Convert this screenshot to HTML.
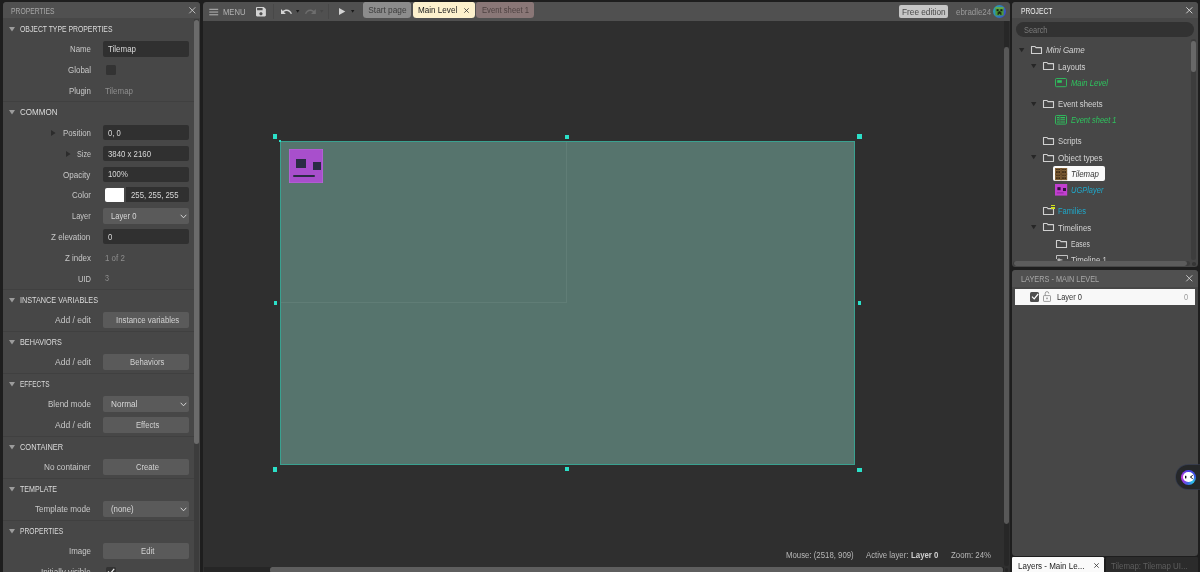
<!DOCTYPE html>
<html><head><meta charset="utf-8"><title>Construct 3</title>
<style>
html,body{margin:0;padding:0;}
body{width:1200px;height:572px;overflow:hidden;background:#1e1e1e;position:relative;font-family:"Liberation Sans",sans-serif;}
body div,body span,body svg{position:absolute;display:block;}
svg{overflow:visible;}
#w{left:0;top:0;width:1200px;height:572px;will-change:transform;}
</style></head><body><div id="w">
<div style="left:3px;top:2px;width:197px;height:571px;background:#474747;border-radius:3.5px 3.5px 0 0;"></div>
<div style="left:3px;top:2px;width:197px;height:15.7px;background:#505050;border-radius:3.5px 3.5px 0 0;"></div>
<span style="left:10.5px;top:4.5px;height:13px;line-height:13px;font-size:8.3px;color:#a8a8a8;white-space:nowrap;transform-origin:0 50%;transform:scaleX(0.8154);">PROPERTIES</span>
<svg style="left:188.6px;top:7.2px;" width="6.6" height="6.6" viewBox="0 0 6.6 6.6"><path d="M0.3 0.3 L6.3 6.3 M6.3 0.3 L0.3 6.3" stroke="#c8c8c8" stroke-width="0.9" fill="none"/></svg>
<div style="left:194.1px;top:18.5px;width:5px;height:555px;background:#3c3c3c;"></div>
<div style="left:194.1px;top:19.8px;width:5px;height:424px;background:#6b6b6b;border-radius:2.5px;"></div>
<svg style="left:8.7px;top:26.6px;" width="6" height="5" viewBox="0 0 6 5"><path d="M0 0 H6 L3 4.6 Z" fill="#9c9c9c"/></svg>
<span style="left:20px;top:22.5px;height:13px;line-height:13px;font-size:8.3px;color:#dcdcdc;white-space:nowrap;transform-origin:0 50%;transform:scaleX(0.8253);">OBJECT TYPE PROPERTIES</span>
<span style="left:69.5px;top:43px;height:13px;line-height:13px;font-size:8.3px;color:#c8c8c8;white-space:nowrap;transform-origin:0 50%;transform:scaleX(0.9486);">Name</span>
<div style="left:103px;top:41.2px;width:86px;height:15.6px;background:#303030;border-radius:2px;"></div>
<span style="left:108.2px;top:43.05px;height:13px;line-height:13px;font-size:8.3px;color:#d8d8d8;white-space:nowrap;transform-origin:0 50%;transform:scaleX(0.9585);">Tilemap</span>
<span style="left:67.5px;top:64px;height:13px;line-height:13px;font-size:8.3px;color:#c8c8c8;white-space:nowrap;transform-origin:0 50%;transform:scaleX(0.9587);">Global</span>
<div style="left:106px;top:65.2px;width:9.6px;height:9.4px;background:#333;border-radius:1.5px;"></div>
<span style="left:68.5px;top:84.8px;height:13px;line-height:13px;font-size:8.3px;color:#c8c8c8;white-space:nowrap;transform-origin:0 50%;transform:scaleX(0.9536);">Plugin</span>
<span style="left:105.2px;top:84.8px;height:13px;line-height:13px;font-size:8.3px;color:#8e8e8e;white-space:nowrap;transform-origin:0 50%;transform:scaleX(0.9585);">Tilemap</span>
<div style="left:3px;top:100.5px;width:191px;height:1px;background:#404040;"></div>
<svg style="left:8.7px;top:109.6px;" width="6" height="5" viewBox="0 0 6 5"><path d="M0 0 H6 L3 4.6 Z" fill="#9c9c9c"/></svg>
<span style="left:20px;top:105.5px;height:13px;line-height:13px;font-size:8.3px;color:#dcdcdc;white-space:nowrap;transform-origin:0 50%;transform:scaleX(0.9683);">COMMON</span>
<svg style="left:51.2px;top:129.8px;" width="5" height="6" viewBox="0 0 5 6"><path d="M0 0 L4.6 3 L0 6 Z" fill="#2c2c2c"/></svg>
<span style="left:62.5px;top:126.8px;height:13px;line-height:13px;font-size:8.3px;color:#c8c8c8;white-space:nowrap;transform-origin:0 50%;transform:scaleX(0.9483);">Position</span>
<div style="left:103px;top:124.7px;width:86px;height:15.6px;background:#303030;border-radius:2px;"></div>
<span style="left:108.2px;top:126.55px;height:13px;line-height:13px;font-size:8.3px;color:#d8d8d8;white-space:nowrap;transform-origin:0 50%;transform:scaleX(0.9247);">0, 0</span>
<svg style="left:65.8px;top:150.8px;" width="5" height="6" viewBox="0 0 5 6"><path d="M0 0 L4.6 3 L0 6 Z" fill="#2c2c2c"/></svg>
<span style="left:76.5px;top:147.8px;height:13px;line-height:13px;font-size:8.3px;color:#c8c8c8;white-space:nowrap;transform-origin:0 50%;transform:scaleX(0.8671);">Size</span>
<div style="left:103px;top:145.7px;width:86px;height:15.6px;background:#303030;border-radius:2px;"></div>
<span style="left:108.2px;top:147.55px;height:13px;line-height:13px;font-size:8.3px;color:#d8d8d8;white-space:nowrap;transform-origin:0 50%;transform:scaleX(0.9412);">3840 x 2160</span>
<span style="left:63.2px;top:168.6px;height:13px;line-height:13px;font-size:8.3px;color:#c8c8c8;white-space:nowrap;transform-origin:0 50%;transform:scaleX(0.9703);">Opacity</span>
<div style="left:103px;top:166.5px;width:86px;height:15.6px;background:#303030;border-radius:2px;"></div>
<span style="left:108.2px;top:168.35px;height:13px;line-height:13px;font-size:8.3px;color:#d8d8d8;white-space:nowrap;transform-origin:0 50%;transform:scaleX(0.9328);">100%</span>
<span style="left:71.5px;top:189px;height:13px;line-height:13px;font-size:8.3px;color:#c8c8c8;white-space:nowrap;transform-origin:0 50%;transform:scaleX(0.9580);">Color</span>
<div style="left:125.6px;top:186.9px;width:63.4px;height:15.6px;background:#303030;border-radius:0 2px 2px 0;"></div>
<span style="left:130.5px;top:188.75px;height:13px;line-height:13px;font-size:8.3px;color:#d8d8d8;white-space:nowrap;transform-origin:0 50%;transform:scaleX(0.9357);">255, 255, 255</span>
<div style="left:104.8px;top:188px;width:19.4px;height:13.8px;background:#fff;border-radius:2px 0 0 2px;"></div>
<span style="left:71.8px;top:210px;height:13px;line-height:13px;font-size:8.3px;color:#c8c8c8;white-space:nowrap;transform-origin:0 50%;transform:scaleX(0.9008);">Layer</span>
<div style="left:103px;top:208.1px;width:86px;height:15.6px;background:#5a5a5a;border-radius:2px;"></div>
<span style="left:110.8px;top:210.1px;height:13px;line-height:13px;font-size:8.3px;color:#d8d8d8;white-space:nowrap;transform-origin:0 50%;transform:scaleX(0.9176);">Layer 0</span>
<svg style="left:180px;top:213.5px;" width="7" height="5" viewBox="0 0 7 5"><path d="M0.7 0.8 L3.5 3.8 L6.3 0.8" stroke="#e0e0e0" stroke-width="0.9" fill="none"/></svg>
<span style="left:51.2px;top:231px;height:13px;line-height:13px;font-size:8.3px;color:#c8c8c8;white-space:nowrap;transform-origin:0 50%;transform:scaleX(0.9680);">Z elevation</span>
<div style="left:103px;top:228.9px;width:86px;height:15.6px;background:#303030;border-radius:2px;"></div>
<span style="left:108.2px;top:230.75px;height:13px;line-height:13px;font-size:8.3px;color:#d8d8d8;white-space:nowrap;transform-origin:0 50%;transform:scaleX(0.9316);">0</span>
<span style="left:64.5px;top:251.8px;height:13px;line-height:13px;font-size:8.3px;color:#c8c8c8;white-space:nowrap;transform-origin:0 50%;transform:scaleX(0.9553);">Z index</span>
<span style="left:105.2px;top:251.8px;height:13px;line-height:13px;font-size:8.3px;color:#8e8e8e;white-space:nowrap;transform-origin:0 50%;transform:scaleX(0.9536);">1 of 2</span>
<span style="left:77.5px;top:272.5px;height:13px;line-height:13px;font-size:8.3px;color:#c8c8c8;white-space:nowrap;transform-origin:0 50%;transform:scaleX(0.9095);">UID</span>
<span style="left:105.2px;top:272px;height:13px;line-height:13px;font-size:8.3px;color:#8e8e8e;white-space:nowrap;transform-origin:0 50%;transform:scaleX(0.8666);">3</span>
<div style="left:3px;top:288.5px;width:191px;height:1px;background:#404040;"></div>
<svg style="left:8.7px;top:297.6px;" width="6" height="5" viewBox="0 0 6 5"><path d="M0 0 H6 L3 4.6 Z" fill="#9c9c9c"/></svg>
<span style="left:20px;top:293.5px;height:13px;line-height:13px;font-size:8.3px;color:#dcdcdc;white-space:nowrap;transform-origin:0 50%;transform:scaleX(0.8747);">INSTANCE VARIABLES</span>
<span style="left:54.5px;top:314.2px;height:13px;line-height:13px;font-size:8.3px;color:#c8c8c8;white-space:nowrap;transform-origin:0 50%;transform:scaleX(1.0266);">Add / edit</span>
<div style="left:103px;top:312.3px;width:86px;height:15.6px;background:#5a5a5a;border-radius:2px;"></div>
<span style="left:115.5px;top:314.3px;height:13px;line-height:13px;font-size:8.3px;color:#d2d2d2;white-space:nowrap;transform-origin:0 50%;transform:scaleX(0.9463);">Instance variables</span>
<div style="left:3px;top:330.5px;width:191px;height:1px;background:#404040;"></div>
<svg style="left:8.7px;top:339.6px;" width="6" height="5" viewBox="0 0 6 5"><path d="M0 0 H6 L3 4.6 Z" fill="#9c9c9c"/></svg>
<span style="left:20px;top:335.5px;height:13px;line-height:13px;font-size:8.3px;color:#dcdcdc;white-space:nowrap;transform-origin:0 50%;transform:scaleX(0.8742);">BEHAVIORS</span>
<span style="left:54.5px;top:356.2px;height:13px;line-height:13px;font-size:8.3px;color:#c8c8c8;white-space:nowrap;transform-origin:0 50%;transform:scaleX(1.0266);">Add / edit</span>
<div style="left:103px;top:354.3px;width:86px;height:15.6px;background:#5a5a5a;border-radius:2px;"></div>
<span style="left:129.8px;top:356.3px;height:13px;line-height:13px;font-size:8.3px;color:#d2d2d2;white-space:nowrap;transform-origin:0 50%;transform:scaleX(0.9321);">Behaviors</span>
<div style="left:3px;top:372.5px;width:191px;height:1px;background:#404040;"></div>
<svg style="left:8.7px;top:381.6px;" width="6" height="5" viewBox="0 0 6 5"><path d="M0 0 H6 L3 4.6 Z" fill="#9c9c9c"/></svg>
<span style="left:20px;top:377.5px;height:13px;line-height:13px;font-size:8.3px;color:#dcdcdc;white-space:nowrap;transform-origin:0 50%;transform:scaleX(0.7802);">EFFECTS</span>
<span style="left:47.5px;top:398.2px;height:13px;line-height:13px;font-size:8.3px;color:#c8c8c8;white-space:nowrap;transform-origin:0 50%;transform:scaleX(0.9708);">Blend mode</span>
<div style="left:103px;top:396.3px;width:86px;height:15.6px;background:#5a5a5a;border-radius:2px;"></div>
<span style="left:110.8px;top:398.3px;height:13px;line-height:13px;font-size:8.3px;color:#d8d8d8;white-space:nowrap;transform-origin:0 50%;transform:scaleX(0.9870);">Normal</span>
<svg style="left:180px;top:401.7px;" width="7" height="5" viewBox="0 0 7 5"><path d="M0.7 0.8 L3.5 3.8 L6.3 0.8" stroke="#e0e0e0" stroke-width="0.9" fill="none"/></svg>
<span style="left:54.5px;top:419px;height:13px;line-height:13px;font-size:8.3px;color:#c8c8c8;white-space:nowrap;transform-origin:0 50%;transform:scaleX(1.0266);">Add / edit</span>
<div style="left:103px;top:417.1px;width:86px;height:15.6px;background:#5a5a5a;border-radius:2px;"></div>
<span style="left:135.5px;top:419.1px;height:13px;line-height:13px;font-size:8.3px;color:#d2d2d2;white-space:nowrap;transform-origin:0 50%;transform:scaleX(0.9239);">Effects</span>
<div style="left:3px;top:435.9px;width:191px;height:1px;background:#404040;"></div>
<svg style="left:8.7px;top:445px;" width="6" height="5" viewBox="0 0 6 5"><path d="M0 0 H6 L3 4.6 Z" fill="#9c9c9c"/></svg>
<span style="left:20px;top:440.9px;height:13px;line-height:13px;font-size:8.3px;color:#dcdcdc;white-space:nowrap;transform-origin:0 50%;transform:scaleX(0.8951);">CONTAINER</span>
<span style="left:44px;top:461.2px;height:13px;line-height:13px;font-size:8.3px;color:#c8c8c8;white-space:nowrap;transform-origin:0 50%;transform:scaleX(0.9882);">No container</span>
<div style="left:103px;top:459.3px;width:86px;height:15.6px;background:#5a5a5a;border-radius:2px;"></div>
<span style="left:135.8px;top:461.3px;height:13px;line-height:13px;font-size:8.3px;color:#d2d2d2;white-space:nowrap;transform-origin:0 50%;transform:scaleX(0.9233);">Create</span>
<div style="left:3px;top:477.5px;width:191px;height:1px;background:#404040;"></div>
<svg style="left:8.7px;top:486.6px;" width="6" height="5" viewBox="0 0 6 5"><path d="M0 0 H6 L3 4.6 Z" fill="#9c9c9c"/></svg>
<span style="left:20px;top:482.5px;height:13px;line-height:13px;font-size:8.3px;color:#dcdcdc;white-space:nowrap;transform-origin:0 50%;transform:scaleX(0.8565);">TEMPLATE</span>
<span style="left:35px;top:503.2px;height:13px;line-height:13px;font-size:8.3px;color:#c8c8c8;white-space:nowrap;transform-origin:0 50%;transform:scaleX(0.9781);">Template mode</span>
<div style="left:103px;top:501.3px;width:86px;height:15.6px;background:#5a5a5a;border-radius:2px;"></div>
<span style="left:110.8px;top:503.3px;height:13px;line-height:13px;font-size:8.3px;color:#d8d8d8;white-space:nowrap;transform-origin:0 50%;transform:scaleX(0.9462);">(none)</span>
<svg style="left:180px;top:506.7px;" width="7" height="5" viewBox="0 0 7 5"><path d="M0.7 0.8 L3.5 3.8 L6.3 0.8" stroke="#e0e0e0" stroke-width="0.9" fill="none"/></svg>
<div style="left:3px;top:519.5px;width:191px;height:1px;background:#404040;"></div>
<svg style="left:8.7px;top:528.6px;" width="6" height="5" viewBox="0 0 6 5"><path d="M0 0 H6 L3 4.6 Z" fill="#9c9c9c"/></svg>
<span style="left:20px;top:524.5px;height:13px;line-height:13px;font-size:8.3px;color:#dcdcdc;white-space:nowrap;transform-origin:0 50%;transform:scaleX(0.8097);">PROPERTIES</span>
<span style="left:68.5px;top:545.2px;height:13px;line-height:13px;font-size:8.3px;color:#c8c8c8;white-space:nowrap;transform-origin:0 50%;transform:scaleX(0.9538);">Image</span>
<div style="left:103px;top:543.3px;width:86px;height:15.6px;background:#5a5a5a;border-radius:2px;"></div>
<span style="left:140.5px;top:545.3px;height:13px;line-height:13px;font-size:8.3px;color:#d2d2d2;white-space:nowrap;transform-origin:0 50%;transform:scaleX(0.9299);">Edit</span>
<span style="left:40.8px;top:566px;height:13px;line-height:13px;font-size:8.3px;color:#c8c8c8;white-space:nowrap;transform-origin:0 50%;transform:scaleX(0.9795);">Initially visible</span>
<div style="left:106px;top:566.8px;width:9.6px;height:9.4px;background:#333;border-radius:1.5px;"></div>
<svg style="left:107px;top:568px;" width="8" height="6" viewBox="0 0 8 6"><path d="M1 3.5 L3.2 5.6 L7.2 0.8" stroke="#eee" stroke-width="1.2" fill="none"/></svg>
<div style="left:202.5px;top:2px;width:807.3px;height:571px;background:#2f2f2f;border-radius:3.5px 3.5px 0 0;"></div>
<div style="left:202.5px;top:2px;width:807.3px;height:18.8px;background:#505050;border-radius:3.5px 3.5px 0 0;"></div>
<svg style="left:208.6px;top:7.5px;" width="10" height="8" viewBox="0 0 10 8"><path d="M0.3 1.3 H9.2 M0.3 4.05 H9.2 M0.3 6.8 H9.2" stroke="#c4c4c4" stroke-width="0.9"/></svg>
<span style="left:222.8px;top:5.8px;height:13px;line-height:13px;font-size:8.3px;color:#b4b4b4;white-space:nowrap;transform-origin:0 50%;transform:scaleX(0.9166);">MENU</span>
<svg style="left:256.3px;top:7px;" width="9.9" height="9.4" viewBox="3 3 18 18" preserveAspectRatio="none"><path d="M17 3H5c-1.11 0-2 .9-2 2v14c0 1.1.89 2 2 2h14c1.1 0 2-.9 2-2V7l-4-4zm-5 16c-1.66 0-3-1.34-3-3s1.34-3 3-3 3 1.34 3 3-1.34 3-3 3zm3-10H5V5h10v4z" fill="#d4d4d4"/></svg>
<div style="left:273px;top:4px;width:1px;height:15px;background:#484848;"></div>
<svg style="left:280.7px;top:8.7px;" width="11" height="5.4" viewBox="2 7 20.5 9.5" preserveAspectRatio="none"><path d="M12.5 8c-2.65 0-5.05.99-6.9 2.6L2 7v9h9l-3.62-3.62c1.39-1.16 3.16-1.88 5.12-1.88 3.54 0 6.55 2.31 7.6 5.5l2.37-.78C21.08 11.03 17.15 8 12.5 8z" fill="#d4d4d4"/></svg>
<svg style="left:295.8px;top:10.1px;" width="3.4" height="2.8" viewBox="0 0 3.4 2.8"><path d="M0 0 H3.4 L1.7 2.8 Z" fill="#1a1a1a"/></svg>
<svg style="left:304.9px;top:8.7px;" width="10.8" height="5.4" viewBox="1.5 7 20.5 9.5" preserveAspectRatio="none"><path d="M18.4 10.6C16.55 8.99 14.15 8 11.5 8c-4.65 0-8.58 3.03-9.96 7.22L3.9 16c1.05-3.19 4.05-5.5 7.6-5.5 1.95 0 3.73.72 5.12 1.88L13 16h9V7l-3.6 3.6z" fill="#6e6e6e"/></svg>
<svg style="left:319.7px;top:10.1px;" width="3.4" height="2.8" viewBox="0 0 3.4 2.8"><path d="M0 0 H3.4 L1.7 2.8 Z" fill="#464646"/></svg>
<div style="left:328px;top:4px;width:1px;height:15px;background:#484848;"></div>
<svg style="left:338.8px;top:7.9px;" width="6.3" height="6.9" viewBox="0 0 6.3 6.9"><path d="M0 0 L6.3 3.45 L0 6.9 Z" fill="#d4d4d4"/></svg>
<svg style="left:350.9px;top:10.1px;" width="3.4" height="2.8" viewBox="0 0 3.4 2.8"><path d="M0 0 H3.4 L1.7 2.8 Z" fill="#1a1a1a"/></svg>
<div style="left:363.3px;top:2.2px;width:47.6px;height:16.1px;background:#8c8c8c;border-radius:2.5px 2.5px 3.5px 3.5px;"></div>
<span style="left:368.3px;top:4.3px;height:13px;line-height:13px;font-size:8.3px;color:#3c3c3c;white-space:nowrap;transform-origin:0 50%;">Start page</span>
<div style="left:412.8px;top:2.2px;width:62.2px;height:16.1px;background:#fdf1cd;border-radius:2.5px 2.5px 3.5px 3.5px;"></div>
<span style="left:418px;top:4.3px;height:13px;line-height:13px;font-size:8.3px;color:#222;white-space:nowrap;transform-origin:0 50%;transform:scaleX(0.9767);">Main Level</span>
<svg style="left:464.2px;top:8.3px;" width="5" height="5" viewBox="0 0 5 5"><path d="M0.3 0.3 L4.7 4.7 M4.7 0.3 L0.3 4.7" stroke="#333" stroke-width="0.8" fill="none"/></svg>
<div style="left:476.4px;top:2.2px;width:57.4px;height:16.1px;background:#8a7777;border-radius:2.5px 2.5px 3.5px 3.5px;"></div>
<span style="left:481.7px;top:4.3px;height:13px;line-height:13px;font-size:8.3px;color:#4e4242;white-space:nowrap;transform-origin:0 50%;transform:scaleX(0.9260);">Event sheet 1</span>
<div style="left:899px;top:5.3px;width:49px;height:12.4px;background:#c6c6c6;border-radius:2px;"></div>
<span style="left:901.7px;top:6.1px;height:13px;line-height:13px;font-size:8.3px;color:#4a4a4a;white-space:nowrap;transform-origin:0 50%;transform:scaleX(0.9948);">Free edition</span>
<span style="left:955.6px;top:6.2px;height:13px;line-height:13px;font-size:8.3px;color:#9a9a9a;white-space:nowrap;transform-origin:0 50%;transform:scaleX(0.9508);">ebradle24</span>
<svg style="left:993.2px;top:5.1px;" width="13" height="13" viewBox="0 0 13 13"><defs><linearGradient id="ag" x1="0" y1="0.3" x2="1" y2="0.7"><stop offset="0" stop-color="#2aa4b4"/><stop offset="0.55" stop-color="#2f78bc"/><stop offset="1" stop-color="#3c48c6"/></linearGradient></defs><circle cx="6.5" cy="6.5" r="6.5" fill="url(#ag)"/><rect x="2.4" y="2.3" width="8.2" height="8.2" fill="#4f9a3a"/><rect x="2.4" y="2.3" width="8.2" height="1.2" fill="#6cb050"/><rect x="3.6" y="4.2" width="2" height="2" fill="#16200f"/><rect x="7.4" y="4.2" width="2" height="2" fill="#16200f"/><path d="M5.6 6.2 H7.4 V7.2 H8.4 V10 H7.4 V8.8 H5.6 V10 H4.6 V7.2 H5.6 Z" fill="#16200f"/></svg>
<div style="left:1003.8px;top:20.8px;width:5px;height:544.8px;background:#272727;border-radius:0 0 2.5px 2.5px;"></div>
<div style="left:1003.8px;top:47.2px;width:4.8px;height:476.8px;background:#585858;border-radius:2.4px;"></div>
<div style="left:203.5px;top:567px;width:800px;height:5px;background:#262626;"></div>
<div style="left:270px;top:567.3px;width:732.5px;height:6px;background:#5e5e5e;border-radius:2.5px;"></div>
<div style="left:1004.8px;top:568.4px;width:3.2px;height:3.2px;background:#252525;border-radius:1.6px;"></div>
<div style="left:280px;top:141px;width:575px;height:324px;background:#56746d;box-shadow:inset 0 0 0 1px #3aa190;"></div>
<div style="left:281px;top:302px;width:286px;height:1px;background:#607d76;"></div>
<div style="left:566px;top:142px;width:1px;height:161px;background:#607d76;"></div>
<div style="left:272.7px;top:134.3px;width:4.4px;height:4.4px;background:#2be0c8;"></div>
<div style="left:565.35px;top:135.35px;width:3.5px;height:3.5px;background:#2be0c8;"></div>
<div style="left:857.2px;top:134.2px;width:4.6px;height:4.6px;background:#2be0c8;"></div>
<div style="left:273.75px;top:301.45px;width:3.5px;height:3.5px;background:#2be0c8;"></div>
<div style="left:857.55px;top:301.45px;width:3.5px;height:3.5px;background:#2be0c8;"></div>
<div style="left:272.55px;top:467.45px;width:4.5px;height:4.5px;background:#2be0c8;"></div>
<div style="left:565.3px;top:467.3px;width:3.6px;height:3.6px;background:#2be0c8;"></div>
<div style="left:857.25px;top:467.75px;width:4.5px;height:4.5px;background:#2be0c8;"></div>
<div style="left:279.3px;top:140.4px;width:1.6px;height:1.6px;background:#2be0c8;"></div>
<div style="left:288.7px;top:149.4px;width:34.3px;height:33.6px;background:#a84fcc;box-shadow:inset 0 0 0 0.6px #b96bd8;"></div>
<div style="left:296px;top:159.2px;width:9.9px;height:8.6px;background:#2a2c44;"></div>
<div style="left:312.7px;top:161.7px;width:8.8px;height:8.3px;background:#2a2c44;"></div>
<div style="left:293px;top:175px;width:22px;height:2px;background:#2a2c44;border-radius:1px;"></div>
<span style="left:785.7px;top:548.9px;height:13px;line-height:13px;font-size:8.3px;color:#b8b8b8;white-space:nowrap;transform-origin:0 50%;transform:scaleX(0.9407);">Mouse: (2518, 909)</span>
<span style="left:866px;top:548.9px;height:13px;line-height:13px;font-size:8.3px;color:#b8b8b8;white-space:nowrap;transform-origin:0 50%;transform:scaleX(0.9380);">Active layer:</span>
<span style="left:910.8px;top:548.9px;height:13px;line-height:13px;font-size:8.3px;color:#d0d0d0;white-space:nowrap;transform-origin:0 50%;transform:scaleX(0.9426);font-weight:bold;">Layer 0</span>
<span style="left:951px;top:548.9px;height:13px;line-height:13px;font-size:8.3px;color:#b8b8b8;white-space:nowrap;transform-origin:0 50%;transform:scaleX(0.9426);">Zoom: 24%</span>
<div style="left:1012.4px;top:2px;width:185.2px;height:265px;background:#474747;border-radius:3.5px;"></div>
<div style="left:1012.4px;top:2px;width:185.2px;height:16.1px;background:#505050;border-radius:3.5px 3.5px 0 0;"></div>
<span style="left:1020.5px;top:4.5px;height:13px;line-height:13px;font-size:8.3px;color:#f0f0f0;white-space:nowrap;transform-origin:0 50%;transform:scaleX(0.8132);">PROJECT</span>
<svg style="left:1186px;top:7.2px;" width="6.6" height="6.6" viewBox="0 0 6.6 6.6"><path d="M0.3 0.3 L6.3 6.3 M6.3 0.3 L0.3 6.3" stroke="#e0e0e0" stroke-width="0.9" fill="none"/></svg>
<div style="left:1016.3px;top:22px;width:177.8px;height:14.8px;background:#323232;border-radius:7.4px;"></div>
<span style="left:1024px;top:23.6px;height:13px;line-height:13px;font-size:8.3px;color:#7c7c7c;white-space:nowrap;transform-origin:0 50%;transform:scaleX(0.8936);">Search</span>
<div style="left:1191.4px;top:38.5px;width:4.7px;height:221.5px;background:#3d3d3d;border-radius:2.3px;"></div>
<div style="left:1191.4px;top:40.5px;width:4.7px;height:31px;background:#686868;border-radius:2.3px;"></div>
<div style="left:1013.4px;top:261.3px;width:176.6px;height:4.9px;background:#3d3d3d;border-radius:2.4px;"></div>
<div style="left:1013.6px;top:261.3px;width:173.8px;height:4.9px;background:#5c5c5c;border-radius:2.4px;"></div>
<div style="left:1192.3px;top:262.3px;width:3.4px;height:3.4px;background:#363636;border-radius:1.7px;"></div>
<svg style="left:1018.5px;top:47.8px;" width="5.4" height="4.4" viewBox="0 0 5.4 4.4"><path d="M0 0 H5.4 L2.7 4.2 Z" fill="#262626"/></svg>
<svg style="left:1030.8px;top:46px;" width="11" height="8" viewBox="0 0 11 8"><path d="M0.5 0.5 H4 L5 1.6 H10.5 V7.5 H0.5 Z" stroke="#d0d0d0" stroke-width="1.1" fill="none" stroke-linejoin="round"/></svg>
<span style="left:1045.7px;top:44.4px;height:13px;line-height:13px;font-size:8.3px;color:#d4d4d4;white-space:nowrap;transform-origin:0 50%;transform:scaleX(0.9645);font-style:italic;">Mini Game</span>
<svg style="left:1031px;top:64.1px;" width="5.4" height="4.4" viewBox="0 0 5.4 4.4"><path d="M0 0 H5.4 L2.7 4.2 Z" fill="#262626"/></svg>
<svg style="left:1043.4px;top:62.3px;" width="11" height="8" viewBox="0 0 11 8"><path d="M0.5 0.5 H4 L5 1.6 H10.5 V7.5 H0.5 Z" stroke="#d0d0d0" stroke-width="1.1" fill="none" stroke-linejoin="round"/></svg>
<span style="left:1058.3px;top:60.5px;height:13px;line-height:13px;font-size:8.3px;color:#d4d4d4;white-space:nowrap;transform-origin:0 50%;transform:scaleX(0.9392);">Layouts</span>
<svg style="left:1055.2px;top:77.8px;" width="12" height="9.2" viewBox="0 0 12 9.2"><rect x="0.5" y="0.5" width="11" height="8.2" rx="1" stroke="#2ec45e" stroke-width="0.9" fill="none"/><rect x="2.2" y="2.2" width="4.6" height="2.6" fill="#2ec45e"/></svg>
<span style="left:1071px;top:76.7px;height:13px;line-height:13px;font-size:8.3px;color:#2ec45e;white-space:nowrap;transform-origin:0 50%;transform:scaleX(0.9219);font-style:italic;">Main Level</span>
<svg style="left:1031px;top:101.6px;" width="5.4" height="4.4" viewBox="0 0 5.4 4.4"><path d="M0 0 H5.4 L2.7 4.2 Z" fill="#262626"/></svg>
<svg style="left:1043.4px;top:99.8px;" width="11" height="8" viewBox="0 0 11 8"><path d="M0.5 0.5 H4 L5 1.6 H10.5 V7.5 H0.5 Z" stroke="#d0d0d0" stroke-width="1.1" fill="none" stroke-linejoin="round"/></svg>
<span style="left:1058.3px;top:98px;height:13px;line-height:13px;font-size:8.3px;color:#d4d4d4;white-space:nowrap;transform-origin:0 50%;transform:scaleX(0.9274);">Event sheets</span>
<svg style="left:1055.2px;top:115.2px;" width="12" height="9.6" viewBox="0 0 12 9.6"><rect x="0.5" y="0.5" width="11" height="8.6" rx="1" stroke="#2ec45e" stroke-width="0.9" fill="none"/><path d="M2 2.6 H4 M5.4 2.6 H10 M2 4.8 H4 M5.4 4.8 H10 M2 7 H4 M5.4 7 H10" stroke="#2ec45e" stroke-width="1.1"/><path d="M4.7 1 V8.6" stroke="#2ec45e" stroke-width="0.5"/></svg>
<span style="left:1071px;top:114.2px;height:13px;line-height:13px;font-size:8.3px;color:#2ec45e;white-space:nowrap;transform-origin:0 50%;transform:scaleX(0.8965);font-style:italic;">Event sheet 1</span>
<svg style="left:1043.4px;top:137.2px;" width="11" height="8" viewBox="0 0 11 8"><path d="M0.5 0.5 H4 L5 1.6 H10.5 V7.5 H0.5 Z" stroke="#d0d0d0" stroke-width="1.1" fill="none" stroke-linejoin="round"/></svg>
<span style="left:1058.3px;top:135.4px;height:13px;line-height:13px;font-size:8.3px;color:#d4d4d4;white-space:nowrap;transform-origin:0 50%;transform:scaleX(0.9265);">Scripts</span>
<svg style="left:1031px;top:155.3px;" width="5.4" height="4.4" viewBox="0 0 5.4 4.4"><path d="M0 0 H5.4 L2.7 4.2 Z" fill="#262626"/></svg>
<svg style="left:1043.4px;top:153.5px;" width="11" height="8" viewBox="0 0 11 8"><path d="M0.5 0.5 H4 L5 1.6 H10.5 V7.5 H0.5 Z" stroke="#d0d0d0" stroke-width="1.1" fill="none" stroke-linejoin="round"/></svg>
<span style="left:1058.4px;top:151.7px;height:13px;line-height:13px;font-size:8.3px;color:#d4d4d4;white-space:nowrap;transform-origin:0 50%;transform:scaleX(0.9668);">Object types</span>
<div style="left:1052.7px;top:166.2px;width:52px;height:14.7px;background:#fafafa;border-radius:2px;"></div>
<svg style="left:1055.2px;top:167.7px;" width="12.2" height="12.2" viewBox="0 0 12.2 12.2"><rect width="12.2" height="12.2" fill="#86643a"/><rect x="1.1" y="1.1" width="3.9" height="3.9" fill="#3e2b15"/><rect x="1.1" y="2.2" width="3.9" height="0.9" fill="#9c7a48"/><rect x="2.6" y="1.1" width="0.9" height="3.9" fill="#6e5230"/><rect x="1.1" y="7.199999999999999" width="3.9" height="3.9" fill="#3e2b15"/><rect x="1.1" y="8.3" width="3.9" height="0.9" fill="#9c7a48"/><rect x="2.6" y="7.199999999999999" width="0.9" height="3.9" fill="#6e5230"/><rect x="7.199999999999999" y="1.1" width="3.9" height="3.9" fill="#3e2b15"/><rect x="7.199999999999999" y="2.2" width="3.9" height="0.9" fill="#9c7a48"/><rect x="8.7" y="1.1" width="0.9" height="3.9" fill="#6e5230"/><rect x="7.199999999999999" y="7.199999999999999" width="3.9" height="3.9" fill="#3e2b15"/><rect x="7.199999999999999" y="8.3" width="3.9" height="0.9" fill="#9c7a48"/><rect x="8.7" y="7.199999999999999" width="0.9" height="3.9" fill="#6e5230"/><path d="M0 6.1 H12.2 M6.1 0 V12.2" stroke="#5a4020" stroke-width="0.8"/></svg>
<span style="left:1071px;top:168px;height:13px;line-height:13px;font-size:8.3px;color:#333;white-space:nowrap;transform-origin:0 50%;transform:scaleX(0.9475);font-style:italic;">Tilemap</span>
<svg style="left:1055.2px;top:184.3px;" width="12.2" height="11.6" viewBox="0 0 12.2 11.6"><rect width="12.2" height="11.6" fill="#c23fd0"/><rect x="2.4" y="3.2" width="3.2" height="3" fill="#32123e"/><rect x="8" y="4" width="3" height="3" fill="#32123e"/><rect x="1.8" y="8.4" width="6.8" height="1" fill="#8e2a9c"/></svg>
<span style="left:1071px;top:184px;height:13px;line-height:13px;font-size:8.3px;color:#1fa8ca;white-space:nowrap;transform-origin:0 50%;transform:scaleX(0.9006);font-style:italic;">UGPlayer</span>
<svg style="left:1043.2px;top:207.4px;" width="11" height="8" viewBox="0 0 11 8"><path d="M0.5 0.5 H4 L5 1.6 H10.5 V7.5 H0.5 Z" stroke="#d0d0d0" stroke-width="1.1" fill="none" stroke-linejoin="round"/></svg>
<div style="left:1051px;top:204.8px;width:1.7px;height:1.6px;background:#d0e020;"></div>
<div style="left:1053.3px;top:204.8px;width:1.7px;height:1.6px;background:#d0e020;"></div>
<div style="left:1051px;top:207px;width:1.7px;height:1.6px;background:#d0e020;"></div>
<div style="left:1053.3px;top:207px;width:1.7px;height:1.6px;background:#d0e020;"></div>
<span style="left:1058.4px;top:205.2px;height:13px;line-height:13px;font-size:8.3px;color:#1fa8ca;white-space:nowrap;transform-origin:0 50%;transform:scaleX(0.9062);">Families</span>
<svg style="left:1031px;top:225.1px;" width="5.4" height="4.4" viewBox="0 0 5.4 4.4"><path d="M0 0 H5.4 L2.7 4.2 Z" fill="#262626"/></svg>
<svg style="left:1043.2px;top:223.3px;" width="11" height="8" viewBox="0 0 11 8"><path d="M0.5 0.5 H4 L5 1.6 H10.5 V7.5 H0.5 Z" stroke="#d0d0d0" stroke-width="1.1" fill="none" stroke-linejoin="round"/></svg>
<span style="left:1058.4px;top:221.5px;height:13px;line-height:13px;font-size:8.3px;color:#d4d4d4;white-space:nowrap;transform-origin:0 50%;transform:scaleX(0.9430);">Timelines</span>
<svg style="left:1055.7px;top:239.8px;" width="11" height="8" viewBox="0 0 11 8"><path d="M0.5 0.5 H4 L5 1.6 H10.5 V7.5 H0.5 Z" stroke="#d0d0d0" stroke-width="1.1" fill="none" stroke-linejoin="round"/></svg>
<span style="left:1071px;top:237.9px;height:13px;line-height:13px;font-size:8.3px;color:#d4d4d4;white-space:nowrap;transform-origin:0 50%;transform:scaleX(0.8150);">Eases</span>
<div style="left:1050px;top:252px;width:140px;height:9.4px;overflow:hidden;background:transparent;"><svg style="left:5.7px;top:3.4px;" width="12" height="8" viewBox="0 0 12 8"><path d="M0.5 4 V0.5 H11.5 V4" stroke="#d0d0d0" stroke-width="0.9" fill="none"/><path d="M1.6 4.9 H6.4" stroke="#d0d0d0" stroke-width="0.9"/><circle cx="3" cy="4.9" r="1.1" fill="none" stroke="#d0d0d0" stroke-width="0.8"/></svg>
<span style="left:21px;top:0.8px;height:14px;line-height:14px;font-size:8.3px;color:#d4d4d4;white-space:nowrap;transform-origin:0 50%;transform:scaleX(0.9427);">Timeline 1</span></div>
<div style="left:1012.4px;top:270.3px;width:185.2px;height:285.7px;background:#474747;border-radius:3.5px;"></div>
<div style="left:1012.4px;top:270.3px;width:185.2px;height:17.2px;background:#505050;border-radius:3.5px 3.5px 0 0;"></div>
<span style="left:1020.5px;top:272.7px;height:13px;line-height:13px;font-size:8.3px;color:#a8a8a8;white-space:nowrap;transform-origin:0 50%;transform:scaleX(0.8845);">LAYERS - MAIN LEVEL</span>
<svg style="left:1186.2px;top:274.9px;" width="6.6" height="6.6" viewBox="0 0 6.6 6.6"><path d="M0.3 0.3 L6.3 6.3 M6.3 0.3 L0.3 6.3" stroke="#d0d0d0" stroke-width="0.9" fill="none"/></svg>
<div style="left:1015px;top:289.2px;width:180px;height:15.5px;background:#f8f8f8;"></div>
<div style="left:1030px;top:292px;width:9.2px;height:9.7px;background:#4e4e4e;border-radius:1.5px;"></div>
<svg style="left:1031px;top:293.4px;" width="8" height="7" viewBox="0 0 8 7"><path d="M1 3.6 L3.2 5.8 L7.2 1" stroke="#fff" stroke-width="1.2" fill="none"/></svg>
<svg style="left:1043px;top:291px;" width="8" height="11" viewBox="0 0 8 11"><path d="M2.2 4.6 V2.6 Q2.2 0.6 4 0.6 Q5.8 0.6 5.8 2.6" stroke="#858585" stroke-width="0.8" fill="none"/><rect x="0.5" y="4.6" width="7" height="5.8" rx="0.6" stroke="#858585" stroke-width="0.8" fill="none"/><rect x="3.3" y="6.6" width="1.4" height="1.6" fill="#8a8a8a"/></svg>
<span style="left:1056.7px;top:290.8px;height:13px;line-height:13px;font-size:8.3px;color:#333;white-space:nowrap;transform-origin:0 50%;transform:scaleX(0.9031);">Layer 0</span>
<span style="left:1184.2px;top:290.8px;height:13px;line-height:13px;font-size:8.3px;color:#9a9a9a;white-space:nowrap;transform-origin:0 50%;transform:scaleX(0.8883);">0</span>
<div style="left:1106px;top:557px;width:91.5px;height:16px;background:#2b2b2b;border-radius:1.2px 1.2px 0 0;"></div>
<div style="left:1012.4px;top:557px;width:91.9px;height:16px;background:#fafafa;border-radius:1.2px 1.2px 0 0;"></div>
<span style="left:1017.8px;top:559.8px;height:13px;line-height:13px;font-size:8.3px;color:#222;white-space:nowrap;transform-origin:0 50%;transform:scaleX(0.9661);">Layers - Main Le...</span>
<svg style="left:1093.9px;top:563.2px;" width="5" height="5" viewBox="0 0 5 5"><path d="M0.3 0.3 L4.7 4.7 M4.7 0.3 L0.3 4.7" stroke="#333" stroke-width="0.8" fill="none"/></svg>
<span style="left:1110.8px;top:559.8px;height:13px;line-height:13px;font-size:8.3px;color:#5e5e5e;white-space:nowrap;transform-origin:0 50%;transform:scaleX(0.9527);">Tilemap: Tilemap UI...</span>
<div style="left:1176.2px;top:464.8px;width:30px;height:24.2px;background:#252729;border-radius:12.1px 0 0 12.1px;box-shadow:0 0 0 0.7px #333a4e;"></div>
<div style="left:1180.7px;top:469.5px;width:15.4px;height:15.4px;background:conic-gradient(from 0deg,#4a3ee6 0deg,#3a58e6 80deg,#2cc6e8 135deg,#3a6ae8 185deg,#8a3ce6 230deg,#c83ee0 270deg,#7a3ee6 320deg,#4a3ee6 360deg);border-radius:50%;"></div>
<div style="left:1183px;top:471.9px;width:10.7px;height:10.3px;background:#fff;border-radius:50%;"></div>
<svg style="left:1181px;top:469.3px;" width="15.4" height="15.4" viewBox="0 0 15.4 15.4"><rect x="4" y="6.7" width="1.4" height="2.7" rx="0.4" fill="#111"/><path d="M11.7 6.4 L9.4 8.05 L11.7 9.7" stroke="#111" stroke-width="1" fill="none"/></svg>
</div></body></html>
